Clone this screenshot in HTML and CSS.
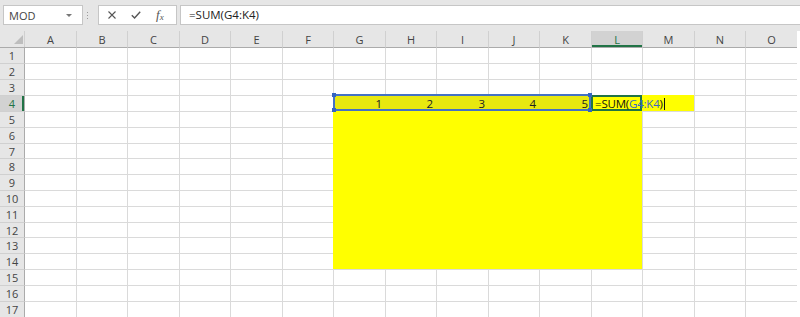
FILE: index.html
```html
<!DOCTYPE html>
<html lang="en">
<head>
    <meta charset="UTF-8">
    <meta name="viewport" content="width=device-width, initial-scale=1.0">
    <title>Book1 - Excel</title>
    <link rel="stylesheet" href="styles.css">
</head>

<body>
    <!-- formula bar -->
    <div class="toolbar">
        <div class="namebox"><span>MOD</span><span class="caret"></span></div>
        <div class="grip"><i></i><i></i><i></i></div>
        <div class="fnbox">
            <svg width="8" height="8" viewBox="0 0 8 8"><path d="M0.5 0.5 L7.5 7.5 M7.5 0.5 L0.5 7.5" stroke="#555" stroke-width="1.1" fill="none"/></svg>
            <svg width="10" height="8" viewBox="0 0 10 8"><path d="M0.8 4.2 L3.6 7 L9.2 0.8" stroke="#555" stroke-width="1.4" fill="none"/></svg>
            <span class="fx"><i>f</i><i class="x">x</i></span>
        </div>
        <div class="formula">=SUM(G4:K4)</div>
    </div>

    <!-- sheet -->
    <table class="sheet">
        <thead>
        <tr>
            <th class="corner"><span class="tri"></span></th>
            <th>A</th><th>B</th><th>C</th><th>D</th><th>E</th><th>F</th><th>G</th>
            <th>H</th><th>I</th><th>J</th><th>K</th><th class="on">L</th><th>M</th><th>N</th><th>O</th>
        </tr>
        </thead>
        <tbody>
        <tr><th>1</th><td></td><td></td><td></td><td></td><td></td><td></td><td></td><td></td><td></td><td></td><td></td><td></td><td></td><td></td><td></td></tr>
        <tr><th>2</th><td></td><td></td><td></td><td></td><td></td><td></td><td></td><td></td><td></td><td></td><td></td><td></td><td></td><td></td><td></td></tr>
        <tr><th>3</th><td></td><td></td><td></td><td></td><td></td><td></td><td></td><td></td><td></td><td></td><td></td><td></td><td></td><td></td><td></td></tr>
        <tr>
            <th class="on">4</th><td></td><td></td><td></td><td></td><td></td><td></td>
            <td class="sel first">1
                <span class="ref"><i class="h tl"></i><i class="h bl"></i><i class="h tr"></i><i class="h br"></i></span>
            </td>
            <td class="sel">2</td><td class="sel">3</td><td class="sel">4</td><td class="sel">5</td>
            <td class="active">=SUM(<span class="arg">G4:K4</span>)<span class="cursor"></span></td>
            <td class="y"></td><td></td><td></td>
        </tr>
        <tr><th>5</th><td></td><td></td><td></td><td></td><td></td><td></td><td class="y"></td><td class="y"></td><td class="y"></td><td class="y"></td><td class="y"></td><td class="y"></td><td></td><td></td><td></td></tr>
        <tr><th>6</th><td></td><td></td><td></td><td></td><td></td><td></td><td class="y"></td><td class="y"></td><td class="y"></td><td class="y"></td><td class="y"></td><td class="y"></td><td></td><td></td><td></td></tr>
        <tr class="short"><th>7</th><td></td><td></td><td></td><td></td><td></td><td></td><td class="y"></td><td class="y"></td><td class="y"></td><td class="y"></td><td class="y"></td><td class="y"></td><td></td><td></td><td></td></tr>
        <tr><th>8</th><td></td><td></td><td></td><td></td><td></td><td></td><td class="y"></td><td class="y"></td><td class="y"></td><td class="y"></td><td class="y"></td><td class="y"></td><td></td><td></td><td></td></tr>
        <tr><th>9</th><td></td><td></td><td></td><td></td><td></td><td></td><td class="y"></td><td class="y"></td><td class="y"></td><td class="y"></td><td class="y"></td><td class="y"></td><td></td><td></td><td></td></tr>
        <tr><th>10</th><td></td><td></td><td></td><td></td><td></td><td></td><td class="y"></td><td class="y"></td><td class="y"></td><td class="y"></td><td class="y"></td><td class="y"></td><td></td><td></td><td></td></tr>
        <tr><th>11</th><td></td><td></td><td></td><td></td><td></td><td></td><td class="y"></td><td class="y"></td><td class="y"></td><td class="y"></td><td class="y"></td><td class="y"></td><td></td><td></td><td></td></tr>
        <tr class="short"><th>12</th><td></td><td></td><td></td><td></td><td></td><td></td><td class="y"></td><td class="y"></td><td class="y"></td><td class="y"></td><td class="y"></td><td class="y"></td><td></td><td></td><td></td></tr>
        <tr><th>13</th><td></td><td></td><td></td><td></td><td></td><td></td><td class="y"></td><td class="y"></td><td class="y"></td><td class="y"></td><td class="y"></td><td class="y"></td><td></td><td></td><td></td></tr>
        <tr><th>14</th><td></td><td></td><td></td><td></td><td></td><td></td><td class="y"></td><td class="y"></td><td class="y"></td><td class="y"></td><td class="y"></td><td class="y"></td><td></td><td></td><td></td></tr>
        <tr><th>15</th><td></td><td></td><td></td><td></td><td></td><td></td><td></td><td></td><td></td><td></td><td></td><td></td><td></td><td></td><td></td></tr>
        <tr><th>16</th><td></td><td></td><td></td><td></td><td></td><td></td><td></td><td></td><td></td><td></td><td></td><td></td><td></td><td></td><td></td></tr>
        <tr><th>17</th><td></td><td></td><td></td><td></td><td></td><td></td><td></td><td></td><td></td><td></td><td></td><td></td><td></td><td></td><td></td></tr>
        </tbody>
    </table>
</body>
</html>
```

FILE: styles.css
```css
* {
    box-sizing: border-box;
}
body {
    margin: 0;
    background-color: #fff;
    font-family: "Open Sans", "Noto Sans", sans-serif;
    overflow: hidden;
}

/* formula bar */
.toolbar {
    display: flex;
    height: 31px;
    padding: 5px 0 0 3px;
    background-color: #e6e6e6;
}
.namebox {
    display: flex;
    align-items: center;
    justify-content: space-between;
    width: 80px;
    height: 20px;
    padding: 0 10px 0 5px;
    background-color: #fff;
    border: 1px solid #c6c6c6;
    font-size: 11px;
    color: #444;
}
.caret {
    border-left: 3px solid transparent;
    border-right: 3px solid transparent;
    border-top: 3px solid #777;
}
.grip {
    display: flex;
    flex-direction: column;
    justify-content: center;
    gap: 2px;
    width: 15px;
    height: 20px;
    padding-left: 4px;
}
.grip i {
    width: 1px;
    height: 1px;
    background-color: #9a9a9a;
}
.fnbox {
    display: flex;
    align-items: center;
    gap: 15px;
    width: 79px;
    height: 20px;
    margin-right: 3px;
    padding-left: 9px;
    background-color: #fff;
    border: 1px solid #c6c6c6;
}
.fx {
    font-family: "Liberation Serif", serif;
    font-size: 13px;
    line-height: 13px;
    color: #555;
}
.fx .x {
    font-size: 9px;
    position: relative;
    top: 1px;
}
.formula {
    flex: 1;
    height: 20px;
    padding-left: 8px;
    background-color: #fff;
    border: 1px solid #c6c6c6;
    border-right: none;
    font-size: 11.5px;
    line-height: 18px;
    color: #222;
}

/* sheet */
.sheet {
    border-collapse: separate;
    border-spacing: 0;
    table-layout: fixed;
    width: 797px;
    font-size: 11px;
    color: #222;
}
.sheet tr {
    height: 16px;
}
.sheet tr.short {
    height: 15px;
}
.sheet th, .sheet td {
    padding: 0;
    line-height: 13px;
    border-left: 1px solid #dadada;
    border-top: 1px solid #dadada;
    white-space: nowrap;
}
.sheet th {
    background-color: #e6e6e6;
    font-weight: normal;
    color: #444;
    text-align: center;
}
.sheet thead th {
    border-top: none;
    border-left-color: #d0d0d0;
}
.sheet thead th:nth-child(even) {
    width: 52px;
}
.sheet thead th:nth-child(odd) {
    width: 51px;
}
.sheet thead th.corner {
    width: 24px;
    border-left: none;
    vertical-align: bottom;
    text-align: right;
    padding: 0 1px 3px 0;
}
.tri {
    display: inline-block;
    border-left: 9px solid transparent;
    border-bottom: 9px solid #bdbdbd;
    vertical-align: bottom;
}
.sheet tbody th {
    border-left: none;
    border-top-color: #d0d0d0;
}
.sheet tbody tr:first-child > * {
    border-top-color: #ababab;
}
.sheet tbody td:nth-child(2) {
    border-left-color: #ababab;
}
.sheet th.on {
    background-color: #d2d2d2;
    color: #217346;
}
.sheet thead th.on {
    box-shadow: inset 0 -2px 0 #217346;
}
.sheet tbody th.on {
    box-shadow: inset -2px 0 0 #217346;
}

/* fills and selection */
.sheet td.y {
    background-color: #ffff00;
    border-color: #ffff00;
}
.sheet td.sel {
    background-color: #e8e80f;
    border-left-color: #e8e80f;
    text-align: right;
    padding-right: 3px;
    font-size: 11.5px;
}
.sheet td.first {
    position: relative;
}
.ref {
    position: absolute;
    top: -2px;
    left: -1px;
    width: 258px;
    height: 17px;
    border: 2px solid #4472c4;
}
.ref .h {
    position: absolute;
    width: 4px;
    height: 4px;
    background-color: #3465c0;
}
.ref .tl { top: -3px; left: -3px; }
.ref .bl { bottom: -3px; left: -3px; }
.ref .tr { top: -3px; right: -3px; }
.ref .br { bottom: -3px; right: -3px; }

.sheet td.active {
    background-color: #ffff00;
    border-color: #217346;
    box-shadow: inset 1px 1px 0 #217346, inset -2px -2px 0 #217346;
    padding-left: 3px;
    overflow: visible;
    font-size: 11.5px;
    letter-spacing: -0.2px;
    color: #111;
}
.arg {
    color: #3a67c4;
}
.cursor {
    display: inline-block;
    width: 1px;
    height: 12px;
    margin-left: 1px;
    background-color: #111;
    vertical-align: middle;
}
```
